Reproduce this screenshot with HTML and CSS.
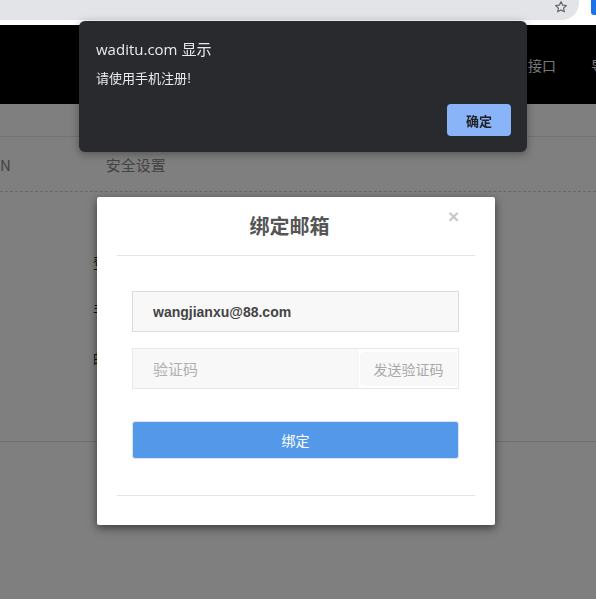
FILE: index.html
```html
<!DOCTYPE html>
<html lang="zh-CN">
<head>
<meta charset="utf-8">
<title>绑定邮箱</title>
<link rel="stylesheet" href="styles.css">
</head>
<body>
<div class="chrome">
  <div class="omnibox">
    <svg class="star" width="14" height="14" viewBox="0 0 24 24"><path d="M12 2.8l2.75 5.9 6.45.75-4.78 4.4 1.28 6.37L12 17.03l-5.7 3.19 1.28-6.37L2.8 9.45l6.45-.75z" fill="none" stroke="#5f6368" stroke-width="2" stroke-linejoin="round"/></svg>
  </div>
  <div class="ext"></div>
</div>

<div class="page">
  <header class="site-header">
    <nav class="nav">
      <a class="nav-item">首页</a>
      <a class="nav-item">数据</a>
      <a class="nav-item">社区</a>
      <a class="nav-item">接口</a>
      <a class="nav-item">导出</a>
    </nav>
  </header>
  <div class="subbar"></div>
  <div class="tabs">
    <span class="tab">N</span>
    <span class="tab tab-sec">安全设置</span>
  </div>
  <div class="settings">
    <div class="row">登录账号</div>
    <div class="row">手机号码</div>
    <div class="row">邮箱地址</div>
  </div>

  <div class="mask">
    <div class="modal">
      <div class="modal-head">
        <h3 class="modal-title">绑定邮箱</h3>
        <span class="close">×</span>
      </div>
      <div class="modal-body">
        <input class="field" type="text" value="wangjianxu@88.com">
        <div class="code-row">
          <input class="code-input" type="text" placeholder="验证码">
          <span class="send">发送验证码</span>
        </div>
        <button class="submit">绑定</button>
      </div>
      <div class="modal-foot"></div>
    </div>
  </div>
</div>

<div class="alert">
  <div class="alert-title">waditu.com 显示</div>
  <div class="alert-msg">请使用手机注册!</div>
  <div class="alert-actions"><button class="alert-ok">确定</button></div>
</div>
</body>
</html>
```

FILE: styles.css
```css
html, body {
  margin: 0;
  padding: 0;
  overflow: hidden;
  width: 596px;
  height: 599px;
  background: #fff;
  font-family: "Liberation Sans", "Noto Sans CJK SC", sans-serif;
}

.chrome {
  height: 25px;
  background: #fff;
  display: flex;
  align-items: flex-start;
  gap: 12px;
  overflow: hidden;
  position: relative;
  z-index: 3;
}
.omnibox {
  flex: none;
  width: 599px;
  height: 34px;
  margin-top: -14px;
  margin-left: -20px;
  background: #e2e4e7;
  border-radius: 0 17px 17px 0;
  display: flex;
  align-items: flex-end;
  justify-content: flex-end;
  padding: 0 11px 6px 0;
  box-sizing: border-box;
}
.star { display: block; }
.ext {
  flex: none;
  width: 12px;
  height: 15px;
  background: #1a73e8;
  border-radius: 0 0 0 3px;
}

.page {
  position: relative;
  height: 574px;
}

.site-header {
  height: 79px;
  background: #000;
  display: flex;
  align-items: center;
}
.nav {
  display: flex;
  gap: 35px;
  margin-left: 339px;
  white-space: nowrap;
}
.nav-item {
  font-family: "Noto Sans CJK SC", sans-serif;
  font-size: 14px;
  color: #eee;
  width: 28px;
  flex: none;
}

.subbar {
  height: 32px;
  border-bottom: 1px solid #e6e6e6;
}
.tabs {
  height: 55px;
  display: flex;
  align-items: center;
  border-bottom: 1px dashed #cfcfcf;
  font-family: "Noto Sans CJK SC", sans-serif;
  font-size: 15px;
  color: #888;
  padding-top: 1px;
  box-sizing: border-box;
}
.tab { flex: none; }
.tab-sec { margin-left: 95px; }

.settings {
  padding: 46px 0 59px 93px;
  border-bottom: 1px solid #e0e0e0;
  font-family: "Noto Sans CJK SC", sans-serif;
  font-size: 14px;
  color: #222;
}
.row { height: 48px; line-height: 48px; }

.mask {
  position: absolute;
  inset: 0;
  background: rgba(0, 0, 0, 0.5);
}
.modal {
  position: absolute;
  left: 97px;
  top: 172px;
  width: 398px;
  height: 328px;
  box-sizing: border-box;
  background: #fff;
  border-radius: 2px;
  padding: 0 20px;
  box-shadow: 0 3px 10px rgba(0, 0, 0, 0.55);
}
.modal-head {
  position: relative;
  height: 58px;
  border-bottom: 1px solid #e5e5e5;
}
.modal-title {
  margin: 0;
  padding-right: 13px;
  text-align: center;
  line-height: 58px;
  font-family: "Noto Sans CJK SC", sans-serif;
  font-size: 20px;
  font-weight: 700;
  color: #555;
}
.close {
  position: absolute;
  right: 16px;
  top: 10px;
  font-family: "Liberation Sans", sans-serif;
  font-size: 19px;
  line-height: 20px;
  font-weight: 700;
  color: #c8c8c8;
}
.modal-body {
  padding: 35px 16px 36px 15px;
  display: flex;
  flex-direction: column;
}
.field {
  height: 41px;
  box-sizing: border-box;
  border: 1px solid #dcdcdc;
  background: #f8f8f8;
  padding: 0 20px;
  font-family: "Liberation Sans", sans-serif;
  font-size: 14px;
  font-weight: 700;
  color: #444;
  outline: none;
  margin: 0;
}
.code-row {
  margin-top: 16px;
  height: 41px;
  box-sizing: border-box;
  border: 1px solid #e8e8e8;
  display: flex;
  align-items: center;
}
.code-input {
  flex: 1;
  height: 39px;
  min-width: 0;
  box-sizing: border-box;
  border: 0;
  background: #f8f8f8;
  padding: 0 20px;
  font-family: "Noto Sans CJK SC", sans-serif;
  font-size: 15px;
  outline: none;
  margin: 0;
}
.code-input::placeholder { color: #b0b0b0; }
.send {
  flex: none;
  width: 97px;
  height: 34px;
  margin: 0 1px 0 1px;
  background: #f8f8f8;
  border-radius: 4px;
  display: flex;
  align-items: center;
  justify-content: center;
  font-family: "Noto Sans CJK SC", sans-serif;
  font-size: 14px;
  color: #a8a8a8;
}
.submit {
  margin-top: 32px;
  height: 38px;
  border: 1px solid #dce6f3;
  border-radius: 3px;
  background: #5498e9;
  color: #fff;
  font-family: "Noto Sans CJK SC", sans-serif;
  font-size: 14px;
  padding: 0;
}
.modal-foot {
  border-top: 1px solid #e5e5e5;
}

.alert {
  position: fixed;
  left: 79px;
  top: 21px;
  width: 448px;
  height: 131px;
  box-sizing: border-box;
  z-index: 5;
  background: #292a2d;
  border-radius: 6px;
  box-shadow: 0 2px 8px rgba(0, 0, 0, 0.35);
  padding: 18px 16px 16px 17px;
  display: flex;
  flex-direction: column;
  color: #e8eaed;
}
.alert-title {
  font-family: "Open Sans", "Noto Sans CJK SC", sans-serif;
  font-size: 15px;
  line-height: 20px;
}
.alert-msg {
  margin-top: 10px;
  font-family: "Noto Sans CJK SC", sans-serif;
  font-size: 13px;
  line-height: 18px;
}
.alert-actions {
  margin-top: auto;
  display: flex;
  justify-content: flex-end;
}
.alert-ok {
  width: 64px;
  height: 32px;
  border: 0;
  border-radius: 4px;
  background: #8ab4f8;
  color: #202124;
  font-family: "Noto Sans CJK SC", sans-serif;
  font-size: 13px;
  font-weight: 700;
  padding: 0;
}
```
